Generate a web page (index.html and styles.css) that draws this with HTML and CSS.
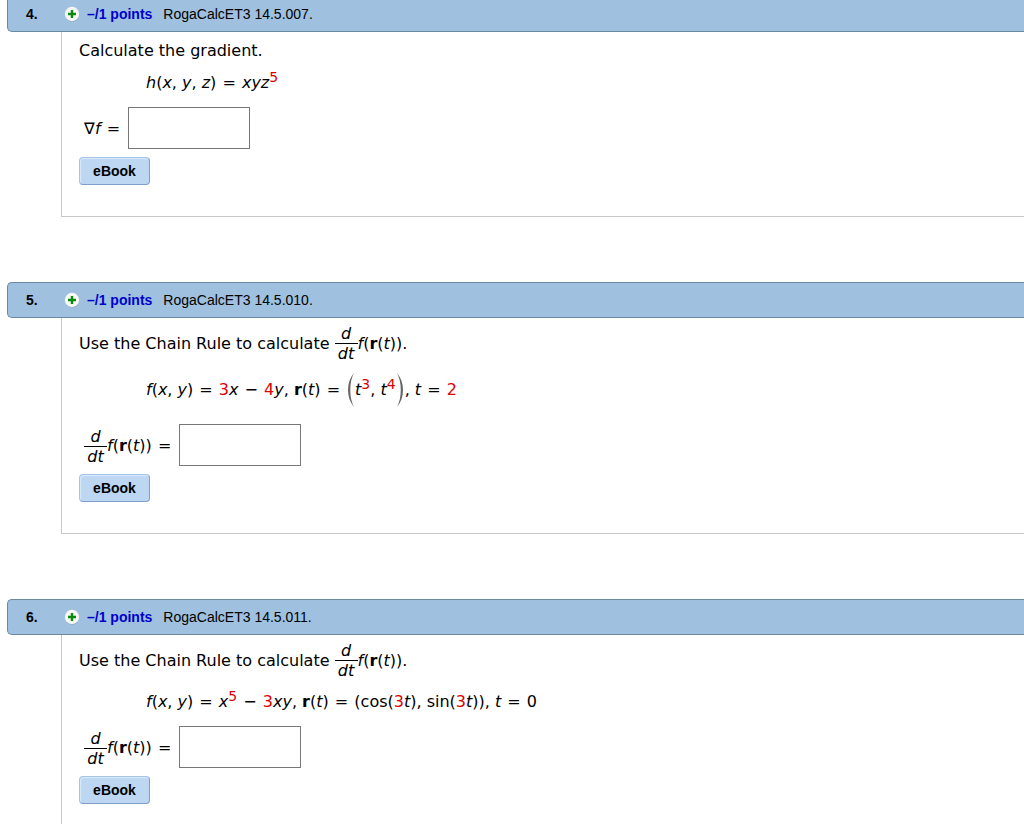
FILE: index.html
```html
<!DOCTYPE html>
<html lang="en">
  <head>
    <meta charset="UTF-8" />
    <meta name="viewport" content="width=device-width, initial-scale=1.0" />
    <title>RogaCalcET3 Assignment</title>
    <link rel="stylesheet" href="styles.css">
  </head>
  <body>
    <main class="assignment">
      <section class="question">
        <header class="question-header">
          <span class="number">4.</span>
          <svg class="plus" viewBox="0 0 16 16" aria-hidden="true">
            <circle cx="8.3" cy="8.8" r="7" fill="#6f8fa8" opacity="0.6" />
            <circle cx="8" cy="8" r="7.2" fill="#f7f7f5" />
            <path d="M8 4v8M4 8h8" stroke="#0a8a0a" stroke-width="2.4" />
          </svg>
          <a class="points" href="#q4">–/1 points</a>
          <span class="source">RogaCalcET3 14.5.007.</span>
        </header>
        <div class="question-body short" id="q4">
          <p class="prompt">Calculate the gradient.</p>
          <p class="formula"><span><i>h</i>(<i>x</i>, <i>y</i>, <i>z</i>) <span class="op">=</span> <i>xyz</i><sup class="red">5</sup></span></p>
          <div class="answer">
            <label for="answer4"><span><span class="nabla">∇</span><i>f</i> <span class="op">=</span></span></label>
            <input type="text" id="answer4">
          </div>
          <button class="ebook" type="button">eBook</button>
        </div>
      </section>

      <section class="question">
        <header class="question-header">
          <span class="number">5.</span>
          <svg class="plus" viewBox="0 0 16 16" aria-hidden="true">
            <circle cx="8.3" cy="8.8" r="7" fill="#6f8fa8" opacity="0.6" />
            <circle cx="8" cy="8" r="7.2" fill="#f7f7f5" />
            <path d="M8 4v8M4 8h8" stroke="#0a8a0a" stroke-width="2.4" />
          </svg>
          <a class="points" href="#q5">–/1 points</a>
          <span class="source">RogaCalcET3 14.5.010.</span>
        </header>
        <div class="question-body" id="q5">
          <p class="prompt">
            <span class="words">Use the Chain Rule to calculate</span>
            <span class="frac"><i>d</i><i class="bottom">dt</i></span>
            <span><i>f</i>(<b>r</b>(<i>t</i>)).</span>
          </p>
          <p class="formula tall">
            <span><i>f</i>(<i>x</i>, <i>y</i>) <span class="op">=</span> <span class="red">3</span><i>x</i> <span class="op">−</span> <span class="red">4</span><i>y</i>, <b>r</b>(<i>t</i>) <span class="op">=</span></span>
            <svg class="paren open" viewBox="0 0 9 36" role="img" aria-label="("><path d="M8 1C0 10 0 26 8 35C3 26 3 10 8 1Z" /></svg>
            <span><i>t</i><sup class="red">3</sup>, <i>t</i><sup class="red">4</sup></span>
            <svg class="paren" viewBox="0 0 9 36" role="img" aria-label=")"><path d="M1 1C9 10 9 26 1 35C6 26 6 10 1 1Z" /></svg>
            <span>, <i>t</i> <span class="op">=</span> <span class="red">2</span></span>
          </p>
          <div class="answer">
            <label for="answer5">
              <span class="frac"><i>d</i><i class="bottom">dt</i></span>
              <span><i>f</i>(<b>r</b>(<i>t</i>)) <span class="op">=</span></span>
            </label>
            <input type="text" id="answer5">
          </div>
          <button class="ebook" type="button">eBook</button>
        </div>
      </section>

      <section class="question">
        <header class="question-header">
          <span class="number">6.</span>
          <svg class="plus" viewBox="0 0 16 16" aria-hidden="true">
            <circle cx="8.3" cy="8.8" r="7" fill="#6f8fa8" opacity="0.6" />
            <circle cx="8" cy="8" r="7.2" fill="#f7f7f5" />
            <path d="M8 4v8M4 8h8" stroke="#0a8a0a" stroke-width="2.4" />
          </svg>
          <a class="points" href="#q6">–/1 points</a>
          <span class="source">RogaCalcET3 14.5.011.</span>
        </header>
        <div class="question-body" id="q6">
          <p class="prompt">
            <span class="words">Use the Chain Rule to calculate</span>
            <span class="frac"><i>d</i><i class="bottom">dt</i></span>
            <span><i>f</i>(<b>r</b>(<i>t</i>)).</span>
          </p>
          <p class="formula"><span><i>f</i>(<i>x</i>, <i>y</i>) <span class="op">=</span> <i>x</i><sup class="red">5</sup> <span class="op">−</span> <span class="red">3</span><i>xy</i>, <b>r</b>(<i>t</i>) <span class="op">=</span> (cos(<span class="red">3</span><i>t</i>), sin(<span class="red">3</span><i>t</i>)), <i>t</i> <span class="op">=</span> 0</span></p>
          <div class="answer">
            <label for="answer6">
              <span class="frac"><i>d</i><i class="bottom">dt</i></span>
              <span><i>f</i>(<b>r</b>(<i>t</i>)) <span class="op">=</span></span>
            </label>
            <input type="text" id="answer6">
          </div>
          <button class="ebook" type="button">eBook</button>
        </div>
      </section>
    </main>
  </body>
</html>
```
FILE: styles.css
```css
body {
  margin: 0;
  background-color: #fff;
  color: #000;
  font-family: Verdana, "DejaVu Sans", sans-serif;
  font-size: 16px;
  line-height: 20px;
}

p {
  margin: 0;
}

/* last question is cut off at the bottom of the window */
.assignment {
  height: 100vh;
  padding-left: 7px;
  overflow: hidden;
}

.question {
  margin-bottom: 65px;
}

.question:first-child {
  margin-top: -4px;
}

/* blue bar */
.question-header {
  display: flex;
  align-items: center;
  box-sizing: border-box;
  height: 36px;
  padding-left: 18px;
  background-color: #9fc1df;
  border: 1px solid #6b899f;
  border-right: none;
  border-radius: 5px 0 0 5px;
  font-family: Arial, "Liberation Sans", sans-serif;
  font-size: 14px;
}

.number {
  width: 38px;
  font-weight: bold;
}

.plus {
  width: 16px;
  height: 16px;
  margin-right: 7px;
}

.points {
  margin-right: 11px;
  color: #0000cc;
  font-weight: bold;
  text-decoration: none;
}

/* question content */
.question-body {
  margin-left: 54px;
  padding: 6px 0 31px 17px;
  border-left: 1px solid #c8c8c8;
  border-bottom: 1px solid #c8c8c8;
}

.question-body.short {
  padding-top: 9px;
}

.prompt,
.formula,
.answer,
.answer label {
  display: flex;
  align-items: center;
}

.words {
  margin-right: 5px;
}

.formula {
  height: 24px;
  margin: 10px 0 12px;
  padding-left: 67px;
}

.formula.tall {
  height: 36px;
  margin: 9px 0 16px;
}

.op {
  margin: 0 1px;
}

.red {
  color: #dd0000;
}

sup {
  font-size: 14px;
  line-height: 0;
}

.frac {
  display: inline-flex;
  flex-direction: column;
  align-items: center;
  width: 23px;
  line-height: 19px;
}

.bottom {
  width: 100%;
  border-top: 1px solid #000;
  text-align: center;
}

.paren {
  width: 9px;
  height: 36px;
  fill: #666;
}

.paren.open {
  margin-left: 5px;
}

.answer {
  padding-left: 5px;
}

.answer label {
  padding-top: 2px;
}

.answer input {
  box-sizing: border-box;
  width: 122px;
  height: 42px;
  margin: 0 0 0 7px;
  padding: 4px;
  border: 1px solid #777;
  background-color: #fff;
  font-size: 16px;
}

.nabla {
  font-family: "Liberation Serif", serif;
}

.ebook {
  display: block;
  width: 71px;
  height: 28px;
  margin-top: 8px;
  padding: 0;
  border: 1px solid;
  border-color: #a5c5e8 #7f9fcb #7f9fcb #a5c5e8;
  border-radius: 4px;
  background-color: #bdd7f3;
  box-shadow: inset 1px 1px 1px #d9e9fa;
  font-family: Arial, "Liberation Sans", sans-serif;
  font-size: 14px;
  font-weight: bold;
  cursor: pointer;
}
```
